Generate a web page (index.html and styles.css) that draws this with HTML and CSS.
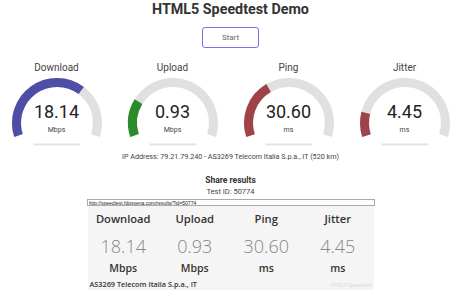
FILE: index.html
```html
<!DOCTYPE html>
<html>
<head>
<meta charset="utf-8">
<link rel="stylesheet" href="styles.css">
</head>
<body>
<h1 class="title">HTML5 Speedtest Demo</h1>
<div class="start-wrap"><button class="start">Start</button></div>

<div class="gauges">
  <div class="gauge">
    <div class="g-label">Download</div>
    <div class="g-body">
      <svg class="g-svg" width="116" height="76" viewBox="0 0 116 76">
        <path d="M19.48 61.52 A40.5 40.5 0 1 1 96.52 61.52" class="g-track"/>
        <path d="M19.48 61.52 A40.5 40.5 0 0 1 82.2 16.5" class="g-fill dl"/>
        <rect x="34.5" y="69.5" width="47" height="1.8" class="g-bar"/>
      </svg>
      <div class="g-value">18.14</div>
      <div class="g-unit">Mbps</div>
    </div>
  </div>
  <div class="gauge">
    <div class="g-label">Upload</div>
    <div class="g-body">
      <svg class="g-svg" width="116" height="76" viewBox="0 0 116 76">
        <path d="M19.48 61.52 A40.5 40.5 0 1 1 96.52 61.52" class="g-track"/>
        <path d="M19.48 61.52 A40.5 40.5 0 0 1 23.5 27.7" class="g-fill ul"/>
        <rect x="34.5" y="69.5" width="47" height="1.8" class="g-bar"/>
      </svg>
      <div class="g-value">0.93</div>
      <div class="g-unit">Mbps</div>
    </div>
  </div>
  <div class="gauge">
    <div class="g-label">Ping</div>
    <div class="g-body">
      <svg class="g-svg" width="116" height="76" viewBox="0 0 116 76">
        <path d="M19.48 61.52 A40.5 40.5 0 1 1 96.52 61.52" class="g-track"/>
        <path d="M19.48 61.52 A40.5 40.5 0 0 1 37.6 14.0" class="g-fill pg"/>
        <rect x="34.5" y="69.5" width="47" height="1.8" class="g-bar"/>
      </svg>
      <div class="g-value">30.60</div>
      <div class="g-unit">ms</div>
    </div>
  </div>
  <div class="gauge">
    <div class="g-label">Jitter</div>
    <div class="g-body">
      <svg class="g-svg" width="116" height="76" viewBox="0 0 116 76">
        <path d="M19.48 61.52 A40.5 40.5 0 1 1 96.52 61.52" class="g-track"/>
        <path d="M19.48 61.52 A40.5 40.5 0 0 1 18.8 38.9" class="g-fill pg"/>
        <rect x="34.5" y="69.5" width="47" height="1.8" class="g-bar"/>
      </svg>
      <div class="g-value">4.45</div>
      <div class="g-unit">ms</div>
    </div>
  </div>
</div>

<div class="ip">IP Address: 79.21.79.240 - AS3269 Telecom Italia S.p.a., IT (520 km)</div>

<h3 class="share">Share results</h3>
<div class="testid">Test ID: 50774</div>
<div class="url-wrap"><input class="url" type="text" value="http://speedtest.fdossena.com/results/?id=50774" readonly></div>

<div class="result">
  <div class="r-grid">
    <div class="r-label">Download</div>
    <div class="r-label">Upload</div>
    <div class="r-label">Ping</div>
    <div class="r-label">Jitter</div>
    <div class="r-value">18.14</div>
    <div class="r-value">0.93</div>
    <div class="r-value">30.60</div>
    <div class="r-value">4.45</div>
    <div class="r-unit">Mbps</div>
    <div class="r-unit">Mbps</div>
    <div class="r-unit">ms</div>
    <div class="r-unit">ms</div>
  </div>
  <div class="r-foot">
    <span class="r-isp">AS3269 Telecom Italia S.p.a., IT</span>
    <span class="r-brand">HTML5 Speedtest</span>
  </div>
</div>
</body>
</html>
```
FILE: styles.css
```css
html, body {
  margin: 0;
  padding: 0;
  background: #fff;
}
body {
  font-family: Roboto, "Liberation Sans", sans-serif;
  color: #333;
  width: 461px;
}
.title {
  margin: 0;
  font-size: 14.3px;
  line-height: 18px;
  font-weight: 700;
  text-align: center;
  color: #333;
}
.start-wrap {
  display: flex;
  justify-content: center;
  margin-top: 9px;
}
.start {
  width: 57px;
  height: 21px;
  box-sizing: border-box;
  border: 1.5px solid #7b6ef0;
  border-radius: 3px;
  background: #fff;
  font-family: Roboto, sans-serif;
  font-size: 8px;
  color: #666;
  padding: 0;
}
.gauges {
  display: flex;
  justify-content: center;
  margin-top: 13px;
}
.gauge {
  width: 116px;
  flex: none;
  display: flex;
  flex-direction: column;
  align-items: center;
}
.g-label {
  font-size: 10px;
  line-height: 13px;
  color: #444;
}
.g-body {
  position: relative;
  width: 116px;
  height: 76px;
}
.g-svg {
  display: block;
}
.g-track {
  fill: none;
  stroke: #e0e0e0;
  stroke-width: 9;
}
.g-fill {
  fill: none;
  stroke-width: 9;
}
.g-fill.dl { stroke: #4e4ea6; }
.g-fill.ul { stroke: #2b8a2b; }
.g-fill.pg { stroke: #a0424a; }
.g-bar { fill: #e2e2e2; }
.g-value {
  position: absolute;
  left: 0;
  right: 0;
  top: 27px;
  text-align: center;
  font-size: 18px;
  line-height: 22px;
  color: #222;
}
.g-unit {
  position: absolute;
  left: 0;
  right: 0;
  top: 52px;
  text-align: center;
  font-size: 7px;
  line-height: 9px;
  color: #444;
}
.ip {
  margin-top: 2px;
  text-align: center;
  font-size: 7.2px;
  line-height: 10px;
  color: #444;
}
.share {
  margin: 13px 0 0;
  text-align: center;
  font-size: 8.5px;
  line-height: 11px;
  font-weight: 700;
  color: #333;
}
.testid {
  text-align: center;
  font-size: 7.5px;
  line-height: 10px;
  color: #444;
  margin-top: 1px;
}
.url-wrap {
  display: flex;
  justify-content: center;
  margin-top: 2px;
}
.url {
  width: 288px;
  height: 7px;
  box-sizing: border-box;
  border: 1px solid #aaa;
  padding: 0 1px;
  margin: 0;
  font-family: "Liberation Sans", Arial, sans-serif;
  font-size: 5px;
  line-height: 5px;
  color: #222;
  background: #fff;
  outline: none;
}
.result {
  width: 286px;
  height: 84px;
  margin: 0 auto;
  background: #f5f5f5;
  font-family: "Open Sans", sans-serif;
  box-sizing: border-box;
  padding-top: 5px;
}
.r-grid {
  display: grid;
  grid-template-columns: repeat(4, 1fr);
  text-align: center;
}
.r-label {
  font-size: 11.2px;
  line-height: 16px;
  font-weight: 600;
  color: #333;
}
.r-value {
  font-size: 18px;
  line-height: 22px;
  font-weight: 300;
  color: #888;
  margin-top: 8px;
}
.r-unit {
  font-size: 10.5px;
  line-height: 14px;
  font-weight: 600;
  color: #333;
  margin-top: 4px;
}
.r-foot {
  display: flex;
  justify-content: space-between;
  align-items: baseline;
  padding: 5px 2px 0 2px;
}
.r-isp {
  font-size: 7.3px;
  line-height: 9px;
  font-weight: 600;
  color: #333;
}
.r-brand {
  font-size: 5px;
  line-height: 9px;
  color: #d8d8d8;
}
```
